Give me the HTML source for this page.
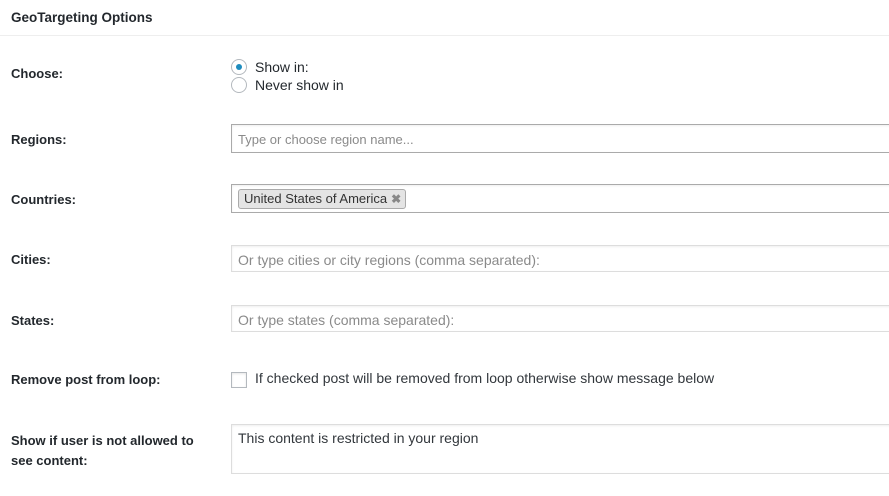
<!DOCTYPE html>
<html><head><style>
body{margin:0;width:889px;height:496px;background:#fff;font-family:"Liberation Sans",sans-serif;color:#23282d;position:relative;overflow:hidden;font-size:13px}
.a{position:absolute}
.lbl{position:absolute;left:11px;font-weight:bold;font-size:13px;color:#23282d}
.inp{position:absolute;left:231px;width:670px;border:1px solid #ddd;box-sizing:border-box;box-shadow:inset 0 1px 2px rgba(0,0,0,.07);background:#fff}
.ph{position:absolute;left:6px;color:#8a8a8a;font-size:13px}
.radio{position:absolute;left:231px;width:16px;height:16px;border:1px solid #b4b9be;border-radius:50%;box-sizing:border-box;background:#fff}
</style></head><body>
<div class="a" style="left:11px;top:10px;font-size:13.5px;font-weight:bold;color:#23282d">GeoTargeting Options</div>
<div class="a" style="left:0;top:35px;width:889px;height:1px;background:#eee"></div>

<div class="lbl" style="top:66px">Choose:</div>
<div class="radio" style="top:59px"><div class="a" style="left:4px;top:4px;width:6px;height:6px;border-radius:50%;background:#1e8cbe"></div></div>
<div class="a" style="left:255px;top:59px;font-size:14px">Show in:</div>
<div class="radio" style="top:77px"></div>
<div class="a" style="left:255px;top:77px;font-size:14px">Never show in</div>

<div class="lbl" style="top:132px">Regions:</div>
<div class="inp" style="top:124px;height:29px;border-color:#aaa"><span class="ph" style="top:7px">Type or choose region name...</span></div>

<div class="lbl" style="top:192px">Countries:</div>
<div class="inp" style="top:184px;height:29px;border-color:#aaa">
<div class="a" style="left:6px;top:4px;height:20px;padding:0 4px 0 5px;border:1px solid #aaa;border-radius:3px;background:#e4e4e4;box-sizing:border-box;line-height:18px;font-size:13px;color:#333">United States of America<span style="color:#888;font-weight:bold;margin-left:4px;font-size:12px">✖</span></div>
</div>

<div class="lbl" style="top:252px">Cities:</div>
<div class="inp" style="top:245px;height:27px"><span class="ph" style="top:6px;font-size:14px">Or type cities or city regions (comma separated):</span></div>

<div class="lbl" style="top:313px">States:</div>
<div class="inp" style="top:305px;height:27px"><span class="ph" style="top:6px;font-size:14px">Or type states (comma separated):</span></div>

<div class="lbl" style="top:372px">Remove post from loop:</div>
<div class="a" style="left:231px;top:372px;width:16px;height:16px;border:1px solid #b4b9be;box-sizing:border-box;box-shadow:inset 0 1px 2px rgba(0,0,0,.1)"></div>
<div class="a" style="left:255px;top:370px;font-size:14px;color:#32373c">If checked post will be removed from loop otherwise show message below</div>

<div class="lbl" style="top:431px;line-height:20px">Show if user is not allowed to<br>see content:</div>
<div class="inp" style="top:424px;height:50px"><span class="a" style="left:6px;top:5px;color:#32373c;font-size:14px">This content is restricted in your region</span></div>
</body></html>
